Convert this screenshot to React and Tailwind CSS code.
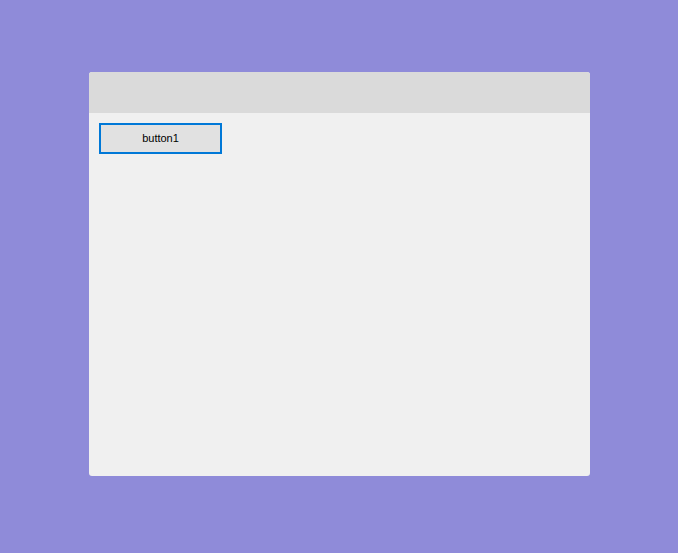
export default function App() {
  return (
    <div className="w-[678px] h-[553px] bg-[#8f8bd9] pt-[72px] pl-[89px] font-['Liberation_Sans',sans-serif]">
      <div className="w-[501px] h-[404px] rounded-[3px] overflow-hidden bg-[#f0f0f0] flex flex-col">
        <div className="h-[41px] bg-[#dadada] shrink-0"></div>
        <div className="p-[10px]">
          <button className="w-[123px] h-[31px] bg-[#e1e1e1] border-2 border-[#0078d7] text-[11px] text-black flex items-center justify-center">
            button1
          </button>
        </div>
      </div>
    </div>
  )
}
